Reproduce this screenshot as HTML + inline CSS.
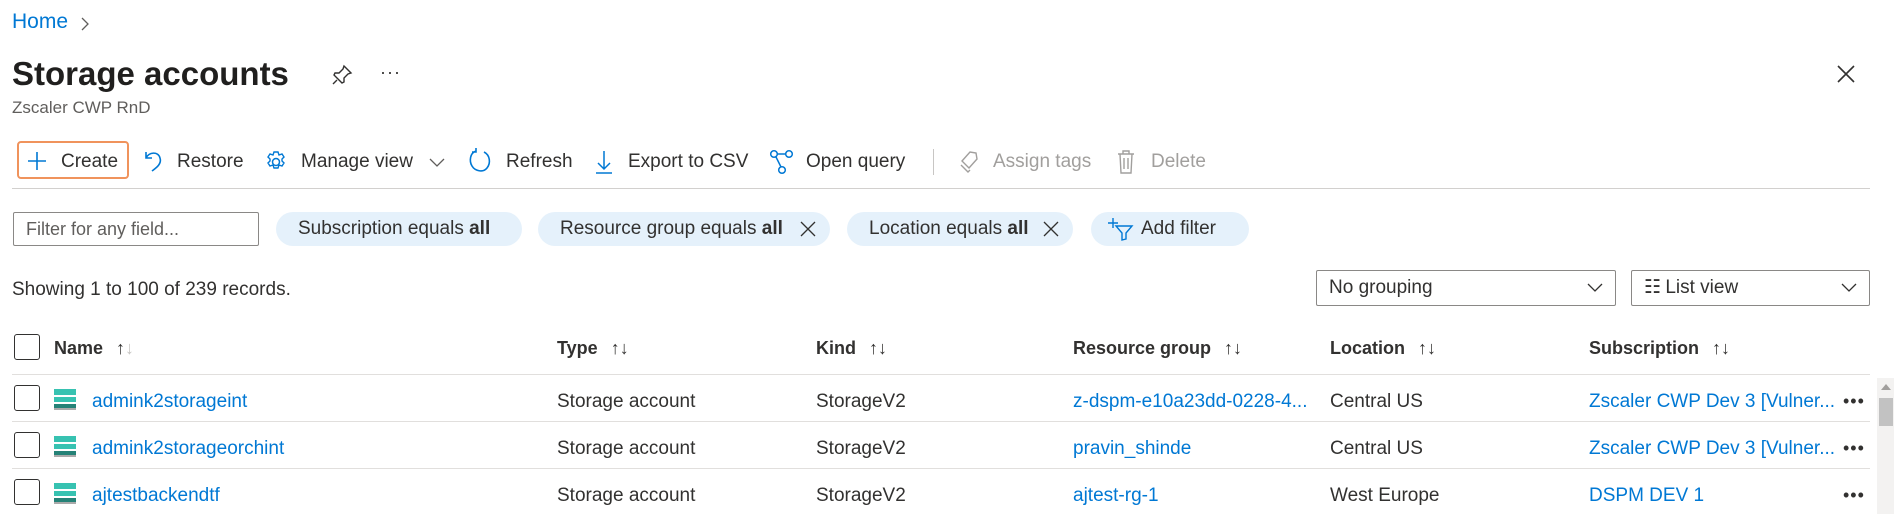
<!DOCTYPE html>
<html><head><meta charset="utf-8"><style>
*{margin:0;padding:0;box-sizing:border-box}
body{width:1894px;height:514px;background:#fff;font-family:"Liberation Sans",sans-serif;color:#323130;position:relative;overflow:hidden;font-size:19px}
.a{position:absolute;white-space:nowrap}
.link{color:#0078d4}
.gray{color:#a19f9d}
.pill{position:absolute;top:212px;height:34px;border-radius:17px;background:#e5f1fb;font-size:19px;line-height:34px;padding-left:22px;color:#323130}
.pill b{font-weight:bold}
.px{position:absolute;top:9px;width:16px;height:16px}
.cb{position:absolute;left:14px;width:26px;height:26px;border:1.5px solid #323130;border-radius:3px}
.hl{position:absolute;left:12px;width:1858px;height:1px;background:#e1dfdd}
.th{position:absolute;top:338px;font-weight:bold;font-size:18px;color:#323130}
.row{font-size:19px}
.tb{font-size:19px;top:151px}
.dd{position:absolute;top:270px;height:36px;border:1px solid #8a8886;border-radius:2px;font-size:19px;line-height:34px;padding-left:12px}
</style></head><body>
<div class="a link" style="left:12px;top:10px;font-size:21px">Home</div>
<svg class="a" style="left:80px;top:16px" width="10" height="16"><path d="M2 2l6 6-6 6" fill="none" stroke="#605e5c" stroke-width="1.3"/></svg>
<div class="a" style="left:12px;top:55px;font-size:33px;font-weight:bold;color:#201f1e">Storage accounts</div>
<svg class="a" style="left:331px;top:64px" width="22" height="22" viewBox="0 0 22 22"><path d="M13 2l7 7-3 1-4 4 0 4-2 1-8-8 1-2 4 0 4-4z M6 16l-4 4" fill="none" stroke="#323130" stroke-width="1.4"/></svg>
<div class="a" style="left:380px;top:62px;font-size:18px;letter-spacing:1px">···</div>
<div class="a" style="left:12px;top:98px;font-size:17px;color:#605e5c">Zscaler CWP RnD</div>
<svg class="a" style="left:1836px;top:64px" width="20" height="20"><path d="M2 2l16 16M18 2L2 18" stroke="#323130" stroke-width="1.6"/></svg>

<!-- toolbar -->
<div class="a" style="left:17px;top:141px;width:112px;height:38px;border:2px solid #f0935c;border-radius:4px"></div>
<svg class="a" style="left:27px;top:151px" width="20" height="20"><path d="M10 1v18M1 10h18" stroke="#0078d4" stroke-width="1.6"/></svg>
<div class="a tb" style="left:61px">Create</div>
<svg class="a" style="left:143px;top:149px" width="22" height="24" viewBox="0 0 22 24"><path d="M3 3v6h6 M3 9c3-6 12-7 14 0 2 6-4 10-8 13" fill="none" stroke="#0078d4" stroke-width="1.6"/></svg>
<div class="a tb" style="left:177px">Restore</div>
<svg class="a" style="left:264px;top:150px" width="24" height="24" viewBox="0 0 24 24"><circle cx="12" cy="12" r="3.5" fill="none" stroke="#0078d4" stroke-width="1.5"/><path d="M10 2h4l1 3 3-1 2 3-2 2 0 2 2 2-2 3-3-1-1 3h-4l-1-3-3 1-2-3 2-2v-2l-2-2 2-3 3 1z" fill="none" stroke="#0078d4" stroke-width="1.4"/></svg>
<div class="a tb" style="left:301px">Manage view</div>
<svg class="a" style="left:429px;top:158px" width="16" height="10"><path d="M1 1l7 7 7-7" fill="none" stroke="#605e5c" stroke-width="1.3"/></svg>
<svg class="a" style="left:467px;top:147px" width="26" height="28" viewBox="0 0 26 28"><path d="M9 4C3 6 2 14 5 19s11 7 15 2 3-13-3-16 M9 1v4H5" fill="none" stroke="#0078d4" stroke-width="1.6"/></svg>
<div class="a tb" style="left:506px">Refresh</div>
<svg class="a" style="left:595px;top:149px" width="18" height="26"><path d="M9 2v18M3 14l6 6 6-6M1 24h16" fill="none" stroke="#0078d4" stroke-width="1.5"/></svg>
<div class="a tb" style="left:628px">Export to CSV</div>
<svg class="a" style="left:769px;top:149px" width="26" height="26" viewBox="0 0 26 26"><circle cx="5" cy="5" r="3.3" fill="none" stroke="#0078d4" stroke-width="1.5"/><circle cx="20" cy="5" r="3.3" fill="none" stroke="#0078d4" stroke-width="1.5"/><circle cx="13" cy="21" r="3.3" fill="none" stroke="#0078d4" stroke-width="1.5"/><path d="M8 5h9M7 8l5 10" stroke="#0078d4" stroke-width="1.5"/></svg>
<div class="a tb" style="left:806px">Open query</div>
<div class="a" style="left:933px;top:149px;width:1px;height:26px;background:#c8c6c4"></div>
<svg class="a" style="left:958px;top:149px" width="24" height="26" viewBox="0 0 24 26"><path d="M4 12l8-9 6 1 1 6-8 9z M3 16l7 7 2-2" fill="none" stroke="#a19f9d" stroke-width="1.4"/></svg>
<div class="a gray tb" style="left:993px">Assign tags</div>
<svg class="a" style="left:1116px;top:149px" width="20" height="26" viewBox="0 0 20 26"><path d="M2 5h16M7 5V2h6v3M4 5l1 19h10l1-19M8 9v11M12 9v11" fill="none" stroke="#a19f9d" stroke-width="1.4"/></svg>
<div class="a gray tb" style="left:1151px">Delete</div>
<div class="a" style="left:12px;top:188px;width:1858px;height:1px;background:#d2d0ce"></div>

<!-- filters -->
<div class="a" style="left:13px;top:212px;width:246px;height:34px;border:1px solid #8a8886;border-radius:2px;font-size:18px;line-height:32px;padding-left:12px;color:#605e5c">Filter for any field...</div>
<div class="pill" style="left:276px;width:246px">Subscription equals <b>all</b></div>
<div class="pill" style="left:538px;width:292px">Resource group equals <b>all</b><svg class="px" style="right:14px" viewBox="0 0 16 16"><path d="M1 1l14 14M15 1L1 15" stroke="#323130" stroke-width="1.3"/></svg></div>
<div class="pill" style="left:847px;width:226px">Location equals <b>all</b><svg class="px" style="right:14px" viewBox="0 0 16 16"><path d="M1 1l14 14M15 1L1 15" stroke="#323130" stroke-width="1.3"/></svg></div>
<div class="pill" style="left:1091px;width:158px;padding-left:50px">Add filter<svg class="a" style="left:16px;top:5px" width="28" height="24" viewBox="0 0 28 24"><path d="M6 1v10M1 6h10" stroke="#0078d4" stroke-width="1.4"/><path d="M9 9h16l-6 7v6l-4 1v-7z" fill="none" stroke="#0078d4" stroke-width="1.4"/></svg></div>

<div class="a" style="left:12px;top:279px;font-size:19px">Showing 1 to 100 of 239 records.</div>
<div class="dd" style="left:1316px;width:300px">No grouping<svg class="a" style="right:12px;top:12px" width="16" height="10"><path d="M1 1l7 7 7-7" fill="none" stroke="#323130" stroke-width="1.3"/></svg></div>
<div class="dd" style="left:1631px;width:239px"><span style="letter-spacing:-1px">☷</span> List view<svg class="a" style="right:12px;top:12px" width="16" height="10"><path d="M1 1l7 7 7-7" fill="none" stroke="#323130" stroke-width="1.3"/></svg></div>

<!-- table -->
<div class="cb" style="top:334px"></div>
<div class="th" style="left:54px">Name <span style="font-weight:normal;margin-left:8px">↑<span style="color:#c8c6c4">↓</span></span></div>
<div class="th" style="left:557px">Type <span style="font-weight:normal;margin-left:8px">↑↓</span></div>
<div class="th" style="left:816px">Kind <span style="font-weight:normal;margin-left:8px">↑↓</span></div>
<div class="th" style="left:1073px">Resource group <span style="font-weight:normal;margin-left:8px">↑↓</span></div>
<div class="th" style="left:1330px">Location <span style="font-weight:normal;margin-left:8px">↑↓</span></div>
<div class="th" style="left:1589px">Subscription <span style="font-weight:normal;margin-left:8px">↑↓</span></div>
<div class="hl" style="top:374px"></div>
<div class="hl" style="top:421px"></div>
<div class="hl" style="top:468px"></div>

<div class="cb" style="top:385px"></div>
<div class="cb" style="top:432px"></div>
<div class="cb" style="top:479px"></div>

<svg class="a" style="left:54px;top:388px" width="22" height="22"><rect y="1" width="22" height="6" fill="#37c2b1"/><rect y="9" width="22" height="5" fill="#37c2b1"/><rect y="16" width="22" height="5" fill="#258277"/><rect y="20" width="22" height="2" fill="#aaa"/></svg>
<svg class="a" style="left:54px;top:435px" width="22" height="22"><rect y="1" width="22" height="6" fill="#37c2b1"/><rect y="9" width="22" height="5" fill="#37c2b1"/><rect y="16" width="22" height="5" fill="#258277"/><rect y="20" width="22" height="2" fill="#aaa"/></svg>
<svg class="a" style="left:54px;top:482px" width="22" height="22"><rect y="1" width="22" height="6" fill="#37c2b1"/><rect y="9" width="22" height="5" fill="#37c2b1"/><rect y="16" width="22" height="5" fill="#258277"/><rect y="20" width="22" height="2" fill="#aaa"/></svg>

<div class="a link row" style="left:92px;top:391px">admink2storageint</div>
<div class="a row" style="left:557px;top:391px">Storage account</div>
<div class="a row" style="left:816px;top:391px">StorageV2</div>
<div class="a link row" style="left:1073px;top:391px">z-dspm-e10a23dd-0228-4...</div>
<div class="a row" style="left:1330px;top:391px">Central US</div>
<div class="a link row" style="left:1589px;top:391px">Zscaler CWP Dev 3 [Vulner...</div>

<div class="a link row" style="left:92px;top:438px">admink2storageorchint</div>
<div class="a row" style="left:557px;top:438px">Storage account</div>
<div class="a row" style="left:816px;top:438px">StorageV2</div>
<div class="a link row" style="left:1073px;top:438px">pravin_shinde</div>
<div class="a row" style="left:1330px;top:438px">Central US</div>
<div class="a link row" style="left:1589px;top:438px">Zscaler CWP Dev 3 [Vulner...</div>

<div class="a link row" style="left:92px;top:485px">ajtestbackendtf</div>
<div class="a row" style="left:557px;top:485px">Storage account</div>
<div class="a row" style="left:816px;top:485px">StorageV2</div>
<div class="a link row" style="left:1073px;top:485px">ajtest-rg-1</div>
<div class="a row" style="left:1330px;top:485px">West Europe</div>
<div class="a link row" style="left:1589px;top:485px">DSPM DEV 1</div>

<div class="a" style="left:1843px;top:391px;font-size:18px;letter-spacing:1px">•••</div>
<div class="a" style="left:1843px;top:438px;font-size:18px;letter-spacing:1px">•••</div>
<div class="a" style="left:1843px;top:485px;font-size:18px;letter-spacing:1px">•••</div>

<div class="a" style="left:1877px;top:378px;width:17px;height:136px;background:#f3f2f1"></div>
<div class="a" style="left:1881px;top:384px;width:0;height:0;border-left:5px solid transparent;border-right:5px solid transparent;border-bottom:6px solid #a19f9d"></div>
<div class="a" style="left:1879px;top:398px;width:14px;height:28px;background:#c2c2c2"></div>
</body></html>
